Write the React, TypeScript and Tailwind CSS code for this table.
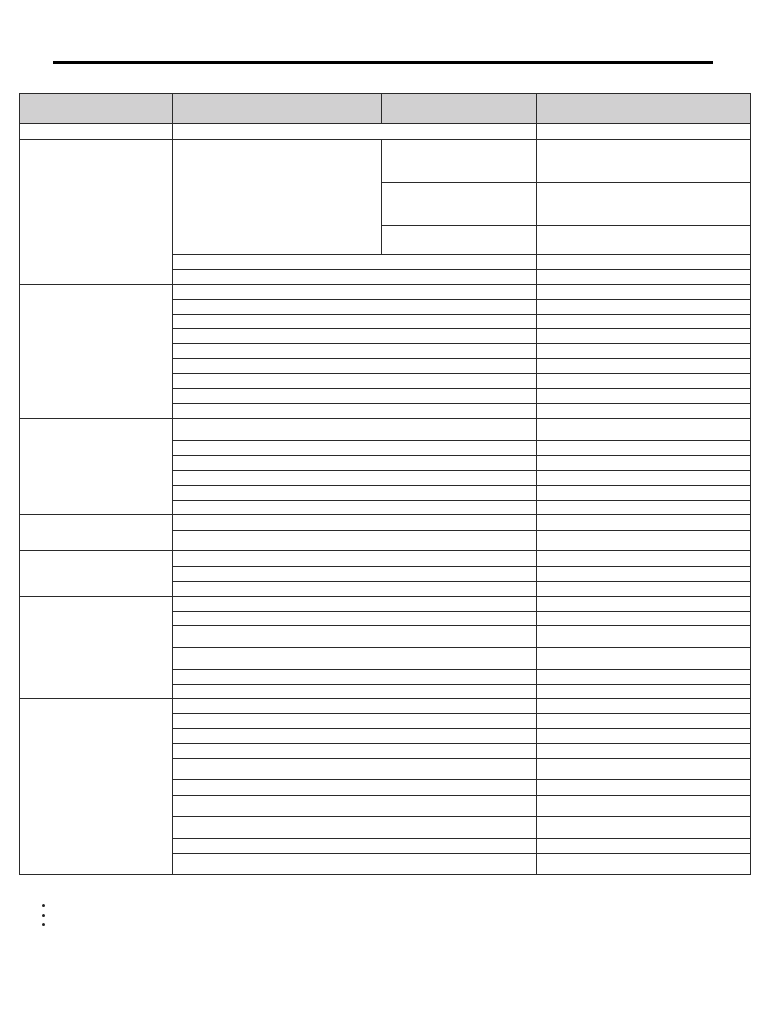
const cell = 'border border-[#2a2a2a] p-0';

// row heights (px) for each section of the table body, in order
const groups: number[][] = [
  [15, 15, 14, 15, 15, 15, 15, 15, 15],
  [22, 15, 15, 15, 15, 14],
  [16, 20],
  [16, 15, 15],
  [15, 14, 22, 22, 15, 14],
  [15, 15, 15, 15, 21, 16, 21, 22, 15, 21],
];

function GroupRows({ heights }: { heights: number[] }) {
  return (
    <>
      {heights.map((h, i) => (
        <tr key={i} style={{ height: h }}>
          {i === 0 && <td className={cell} rowSpan={heights.length}></td>}
          <td className={cell} colSpan={2}></td>
          <td className={cell}></td>
        </tr>
      ))}
    </>
  );
}

export default function App() {
  return (
    <div className="min-h-screen bg-white pt-[61px] font-['Liberation_Sans',sans-serif]">
      <div className="ml-[53px] w-[660px] h-[3px] bg-black"></div>

      <table className="mt-[29px] ml-[19px] w-[731px] table-fixed border-collapse">
        <colgroup>
          <col className="w-[153px]" />
          <col className="w-[209px]" />
          <col className="w-[155px]" />
          <col className="w-[214px]" />
        </colgroup>
        <thead>
          <tr className="h-[30px] bg-[#d1d0d1]">
            <th className={cell}></th>
            <th className={cell}></th>
            <th className={cell}></th>
            <th className={cell}></th>
          </tr>
        </thead>
        <tbody>
          <tr className="h-[16px]">
            <td className={cell}></td>
            <td className={cell} colSpan={2}></td>
            <td className={cell}></td>
          </tr>

          {/* section with nested sub-rows */}
          <tr className="h-[43px]">
            <td className={cell} rowSpan={5}></td>
            <td className={cell} rowSpan={3}></td>
            <td className={cell}></td>
            <td className={cell}></td>
          </tr>
          <tr className="h-[43px]">
            <td className={cell}></td>
            <td className={cell}></td>
          </tr>
          <tr className="h-[29px]">
            <td className={cell}></td>
            <td className={cell}></td>
          </tr>
          <tr className="h-[15px]">
            <td className={cell} colSpan={2}></td>
            <td className={cell}></td>
          </tr>
          <tr className="h-[15px]">
            <td className={cell} colSpan={2}></td>
            <td className={cell}></td>
          </tr>

          {groups.map((g, i) => (
            <GroupRows key={i} heights={g} />
          ))}
        </tbody>
      </table>

      <div className="mt-[29px] ml-[42px] flex flex-col gap-[6.5px]">
        <span className="block w-[3px] h-[3px] rounded-full bg-[#222]"></span>
        <span className="block w-[3px] h-[3px] rounded-full bg-[#222]"></span>
        <span className="block w-[3px] h-[3px] rounded-full bg-[#222]"></span>
      </div>
    </div>
  );
}
